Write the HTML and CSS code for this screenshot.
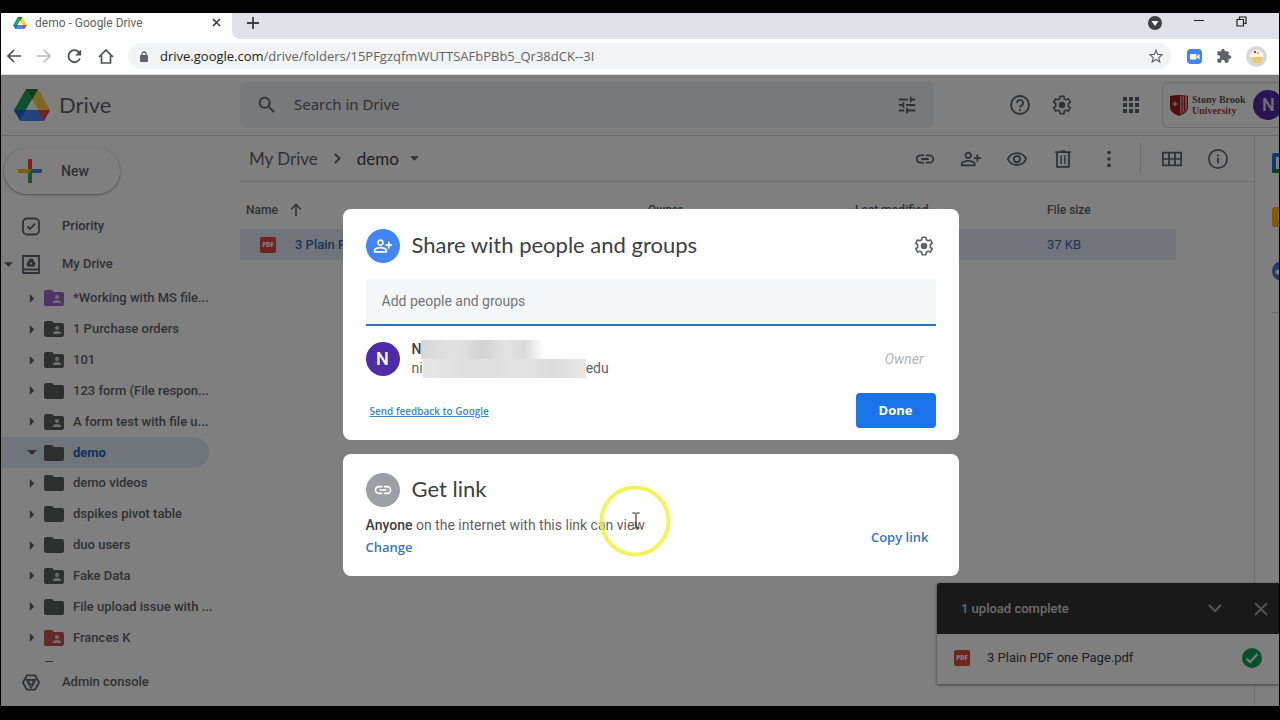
FILE: index.html
```html
<!DOCTYPE html>
<html lang="en">
<head>
<meta charset="utf-8">
<title>demo - Google Drive</title>
<link rel="stylesheet" href="styles.css">
</head>
<body>
<svg class="defs" aria-hidden="true">
  <symbol id="drive" viewBox="0 0 36 32">
    <path fill="#1fa463" d="M12 0h12L6 31 0 21z"/>
    <path fill="#ffcf48" d="M12 0h12l12 21H24z"/>
    <path fill="#4688f4" d="M0 21h36l-6 11H6z"/>
    <path fill="#188038" d="M12 0h12l-6 10.500z"/>
    <path fill="#1967d2" d="M0 21h12L6 31z"/>
    <path fill="#ea4335" d="M24 21h12l-6 11z"/>
    <path fill="#fff" d="M18 10.500 24 21H12z"/>
  </symbol>
  <symbol id="search" viewBox="0 0 24 24"><path d="M15.500 14h-.79l-.28-.27A6.470 6.470 0 0 0 16 9.500 6.500 6.500 0 1 0 9.500 16c1.610 0 3.090-.59 4.230-1.570l.27.28v.79l5 4.990L20.490 19l-4.990-5zm-6 0a4.500 4.500 0 1 1 0-9 4.500 4.500 0 0 1 0 9z"/></symbol>
  <symbol id="gear" viewBox="0 0 24 24">
    <path fill="none" stroke="currentColor" stroke-width="2" stroke-linejoin="round" d="M9.800 1.500h4.400l.6 3 2 1.200 2.900-1 2.200 3.800-2.300 2v3l2.300 2-2.200 3.800-2.900-1-2 1.200-.6 3H9.800l-.6-3-2-1.200-2.900 1-2.200-3.800 2.300-2v-3l-2.300-2 2.200-3.800 2.900 1 2-1.200z"/>
    <circle cx="12" cy="12" r="3.900"/>
  </symbol>
  <symbol id="person-add" viewBox="0 0 24 24"><path d="M9 12c2.210 0 4-1.790 4-4s-1.790-4-4-4-4 1.790-4 4 1.790 4 4 4zm0-6c1.100 0 2 .9 2 2s-.9 2-2 2-2-.9-2-2 .9-2 2-2zm0 7c-2.670 0-8 1.340-8 4v3h16v-3c0-2.660-5.330-4-8-4zm6 5H3v-.99C3.200 16.290 6.300 15 9 15s5.800 1.290 6 2v1zm5-8V7h-2v3h-3v2h3v3h2v-3h3v-2z"/></symbol>
  <symbol id="link" viewBox="0 0 24 24"><path d="M3.900 12c0-1.710 1.390-3.100 3.100-3.100h4V7H7a5 5 0 0 0 0 10h4v-1.900H7c-1.710 0-3.100-1.390-3.100-3.100zM8 13h8v-2H8v2zm9-6h-4v1.900h4a3.100 3.100 0 0 1 0 6.200h-4V17h4a5 5 0 0 0 0-10z"/></symbol>
  <symbol id="folder" viewBox="0 0 20 16"><path d="M2 0h6l2 2h8a2 2 0 0 1 2 2v10a2 2 0 0 1-2 2H2a2 2 0 0 1-2-2V2a2 2 0 0 1 2-2z"/></symbol>
  <symbol id="shared" viewBox="0 0 20 16"><path d="M2 0h6l2 2h8a2 2 0 0 1 2 2v10a2 2 0 0 1-2 2H2a2 2 0 0 1-2-2V2a2 2 0 0 1 2-2z"/><path fill="#ddd" d="M13 5a2 2 0 1 1 0 4 2 2 0 0 1 0-4zm-4 8v-1c0-1.300 2.600-2 4-2s4 .7 4 2v1z"/></symbol>
  <symbol id="right" viewBox="0 0 10 10"><path d="M2.500 0l5 5-5 5z"/></symbol>
  <symbol id="down" viewBox="0 0 10 5"><path d="M0 0h10L5 5z"/></symbol>
</svg>

<div class="window">
  <div class="tabstrip">
    <div class="tab">
      <svg class="favicon"><use href="#drive"/></svg>
      <span class="tab-title">demo - Google Drive</span>
      <button class="plain" aria-label="Close tab"><svg width="9" height="9" viewBox="0 0 9 9"><path d="M1 1l7 7M8 1L1 8" stroke="#3c4043" stroke-width="1.700"/></svg></button>
    </div>
    <div class="strip">
      <button class="plain" aria-label="New tab"><svg width="12" height="12" viewBox="0 0 12 12"><path d="M6 0v12M0 6h12" stroke="#3c4043" stroke-width="1.800"/></svg></button>
      <div class="window-buttons">
        <svg width="14" height="14" viewBox="0 0 14 14"><circle cx="7" cy="7" r="7" fill="#3c4043"/><path d="M3.500 5h7L7 10z" fill="#fff"/></svg>
        <button class="plain" aria-label="Minimize"><svg width="10" height="10" viewBox="0 0 10 10"><path d="M0 2.500h10" stroke="#222"/></svg></button>
        <button class="plain" aria-label="Restore"><svg width="11" height="14" viewBox="0 0 11 14"><path d="M1 3.500h6.500V10H1zM3.500 3.500V1H10v6.500H7.500" fill="none" stroke="#222" stroke-width="1.200"/></svg></button>
      </div>
    </div>
  </div>

  <div class="browser-bar">
    <button class="plain" aria-label="Back"><svg width="14" height="14" viewBox="0 0 14 14"><path d="M14 7H1.500M7 1L1 7l6 6" fill="none" stroke="#4c5054" stroke-width="1.700"/></svg></button>
    <button class="plain" aria-label="Forward"><svg width="14" height="14" viewBox="0 0 14 14"><path d="M0 7h12.500M7 1l6 6-6 6" fill="none" stroke="#babcbe" stroke-width="1.700"/></svg></button>
    <button class="plain" aria-label="Reload"><svg width="15" height="15" viewBox="0 0 15 15"><path d="M13 9.500A6 6 0 1 1 12 3.300L13 4.500" fill="none" stroke="#4c5054" stroke-width="1.800"/><path d="M14.200.5v6H8.200z" fill="#4c5054"/></svg></button>
    <button class="plain" aria-label="Home"><svg width="16" height="15" viewBox="0 0 16 15"><path d="M1 8l7-7 7 7M3.500 6.500V14h9V6.500" fill="none" stroke="#4c5054" stroke-width="1.700"/></svg></button>
    <div class="omnibox">
      <svg width="8" height="11" viewBox="0 0 8 11"><rect y="4" width="8" height="7" rx="1" fill="#5f6368"/><path d="M2 5V3a2 2 0 0 1 4 0v2" fill="none" stroke="#5f6368" stroke-width="1.300"/></svg>
      <span class="url"><span class="host">drive.google.com</span>/drive/folders/15PFgzqfmWUTTSAFbPBb5_Qr38dCK--3I</span>
      <button class="plain" aria-label="Bookmark"><svg width="14" height="14" viewBox="0 0 24 24"><path d="M12 2l3 7.200 7.500.6-5.700 5 1.700 7.400L12 18l-6.500 4.200L7.200 14.800l-5.700-5L9 9.200z" fill="none" stroke="#5f6368" stroke-width="2"/></svg></button>
    </div>
    <div class="extensions">
      <svg width="15" height="15" viewBox="0 0 15 15"><rect width="15" height="15" rx="4" fill="#4385e8"/><rect x="3" y="5" width="6.500" height="5.500" rx="1" fill="#fff"/><path d="M10 7l2.500-2v5.500L10 8.500z" fill="#fff"/></svg>
      <svg width="16" height="16" viewBox="0 0 24 24" fill="#5f6368"><path d="M20.500 11H19V7a2 2 0 0 0-2-2h-4V3.500a2.500 2.500 0 0 0-5 0V5H4a2 2 0 0 0-2 2v3.800h1.500a2.700 2.700 0 0 1 0 5.400H2V20c0 1.100.9 2 2 2h3.800v-1.500a2.700 2.700 0 0 1 5.400 0V22H17a2 2 0 0 0 2-2v-4h1.500a2.500 2.500 0 0 0 0-5z"/></svg>
      <svg width="21" height="21" viewBox="0 0 21 21"><circle cx="10.500" cy="10.500" r="10.500" fill="#d8d8d6"/><path d="M5 11h12l-3 6H8z" fill="#efc66f"/><path d="M4 11c-1-3 1-4 2-4 1-4 7-4 9-1 3 0 3 4 2 5z" fill="#fff6ec"/><circle cx="9" cy="6" r="1.200" fill="#a3463f"/><circle cx="12" cy="7" r=".8" fill="#a3463f"/></svg>
    </div>
  </div>

  <div class="app">
    <header class="header">
      <div class="brand"><svg class="logo"><use href="#drive"/></svg><span>Drive</span></div>
      <label class="search">
        <svg class="i24"><use href="#search"/></svg>
        <input type="text" placeholder="Search in Drive" aria-label="Search in Drive">
        <svg class="i24" viewBox="0 0 24 24"><path d="M3 17v2h6v-2H3zM3 5v2h10V5H3zm10 16v-2h8v-2h-8v-2h-2v6h2zM7 9v2H3v2h4v2h2V9H7zm14 4v-2H11v2h10zm-6-4h2V7h4V5h-4V3h-2v6z"/></svg>
      </label>
      <div class="header-tools">
        <button class="plain" aria-label="Support"><svg class="i20" viewBox="0 0 20 20"><circle cx="10" cy="10" r="9" fill="none" stroke="currentColor" stroke-width="1.800"/><path d="M7 8a3 3 0 1 1 4.500 2.500c-1 .7-1.500 1.200-1.500 2" fill="none" stroke="currentColor" stroke-width="1.800"/><circle cx="10" cy="15" r="1.100"/></svg></button>
        <button class="plain" aria-label="Settings"><svg class="i20"><use href="#gear"/></svg></button>
        <button class="plain apps" aria-label="Apps"><svg width="16" height="16" viewBox="0 0 16 16"><path d="M0 0h4v4H0zM6 0h4v4H6zM12 0h4v4h-4zM0 6h4v4H0zM6 6h4v4H6zM12 6h4v4h-4zM0 12h4v4H0zM6 12h4v4H6zM12 12h4v4h-4z"/></svg></button>
      </div>
      <div class="account">
        <svg width="18" height="21" viewBox="0 0 18 21"><path d="M0 1q9-2 18 0v11q0 6-9 9-9-3-9-9z" fill="#a51d1d"/><path d="M10 1q4-.5 7 .5V12q0 5-7 7z" fill="#c99"/><path d="M12 1v17M14.500 1v15" stroke="#a51d1d"/><path d="M5 6l1 2 2 1-2 1-1 2-1-2-2-1 2-1z" fill="#e8b8b8"/></svg>
        <span class="school"><b>Stony Brook</b><span>University</span></span>
        <span class="avatar small">N</span>
      </div>
    </header>

    <div class="body">
      <nav class="sidebar">
        <button class="new"><svg width="24" height="24" viewBox="0 0 24 24"><path fill="#ea4335" d="M10 0h4v10h-4z"/><path fill="#fbbc04" d="M0 10h14l-4 4H0z"/><path fill="#4285f4" d="M14 10h10v4H14z"/><path fill="#34a853" d="M10 14l4-4v14h-4z"/></svg>New</button>
        <a class="place" href="#"><span class="caret"></span><svg class="i18" viewBox="0 0 18 18"><rect x="1" y="1" width="16" height="16" rx="4" fill="none" stroke="currentColor" stroke-width="1.800"/><path d="M5.500 9l2.500 2.500L13 6" fill="none" stroke="currentColor" stroke-width="1.800"/></svg>Priority</a>
        <a class="place" href="#"><svg class="caret"><use href="#down"/></svg><svg class="i18" viewBox="0 0 18 19"><path d="M1 1h16v17H1zM1 14.500h16" fill="none" stroke="currentColor" stroke-width="1.800"/><path d="M7.500 3.500h3l3.200 5.500-1.500 2.800H5.800L4.300 9zM9 6.800L7.700 9.200h2.600z" fill-rule="evenodd"/></svg>My Drive</a>
        <div class="folders">
          <a class="row" href="#"><svg class="arrow"><use href="#right"/></svg><svg class="folder purple"><use href="#shared"/></svg><span>*Working with MS file...</span></a>
          <a class="row" href="#"><svg class="arrow"><use href="#right"/></svg><svg class="folder"><use href="#shared"/></svg><span>1 Purchase orders</span></a>
          <a class="row" href="#"><svg class="arrow"><use href="#right"/></svg><svg class="folder"><use href="#shared"/></svg><span>101</span></a>
          <a class="row" href="#"><svg class="arrow"><use href="#right"/></svg><svg class="folder"><use href="#folder"/></svg><span>123 form (File respon...</span></a>
          <a class="row" href="#"><svg class="arrow"><use href="#right"/></svg><svg class="folder"><use href="#shared"/></svg><span>A form test with file u...</span></a>
          <a class="row current" href="#"><svg class="arrow"><use href="#down"/></svg><svg class="folder"><use href="#folder"/></svg><span>demo</span></a>
          <a class="row" href="#"><svg class="arrow"><use href="#right"/></svg><svg class="folder"><use href="#folder"/></svg><span>demo videos</span></a>
          <a class="row" href="#"><svg class="arrow"><use href="#right"/></svg><svg class="folder"><use href="#folder"/></svg><span>dspikes pivot table</span></a>
          <a class="row" href="#"><svg class="arrow"><use href="#right"/></svg><svg class="folder"><use href="#folder"/></svg><span>duo users</span></a>
          <a class="row" href="#"><svg class="arrow"><use href="#right"/></svg><svg class="folder"><use href="#shared"/></svg><span>Fake Data</span></a>
          <a class="row" href="#"><svg class="arrow"><use href="#right"/></svg><svg class="folder"><use href="#folder"/></svg><span>File upload issue with ...</span></a>
          <a class="row" href="#"><svg class="arrow"><use href="#right"/></svg><svg class="folder red"><use href="#shared"/></svg><span>Frances K</span></a>
        </div>
        <div class="next-folder"></div>
        <a class="place admin" href="#"><span class="caret"></span><svg class="i18" viewBox="0 0 20 20"><path d="M5.500 2h9L19 10l-4.500 8h-9L1 10z" fill="none" stroke="currentColor" stroke-width="2"/><path d="M5 7h10l-2 4-3 5-3-5z" fill="none" stroke="currentColor" stroke-width="1.600"/><circle cx="10" cy="9.500" r="2.500" fill="none" stroke="currentColor" stroke-width="1.500"/></svg>Admin console</a>
      </nav>

      <main class="main">
        <div class="toolbar">
          <div class="crumbs">
            <a href="#">My Drive</a>
            <svg width="7" height="11" viewBox="0 0 7 11"><path d="M1 1l4.500 4.500L1 10" fill="none" stroke="#5f6368" stroke-width="1.800"/></svg>
            <a href="#" class="here">demo</a>
            <svg class="crumb-caret"><use href="#down"/></svg>
          </div>
          <div class="actions">
            <button class="plain" aria-label="Get link"><svg class="i24"><use href="#link"/></svg></button>
            <button class="plain" aria-label="Share"><svg class="i24"><use href="#person-add"/></svg></button>
            <button class="plain" aria-label="Preview"><svg class="i24" viewBox="0 0 24 24"><path d="M12 5.500c-4.600 0-8.300 2.500-10 6.500 1.700 4 5.400 6.500 10 6.500s8.300-2.500 10-6.500c-1.700-4-5.400-6.500-10-6.500z" fill="none" stroke="currentColor" stroke-width="2"/><circle cx="12" cy="12" r="3.500" fill="none" stroke="currentColor" stroke-width="2"/></svg></button>
            <button class="plain" aria-label="Remove"><svg class="i24" viewBox="0 0 24 24"><path d="M5.500 5v15.500h13V5M3.500 4.500h17M9.500 3.500h5" fill="none" stroke="currentColor" stroke-width="2"/><path d="M10 8v9.500M14 8v9.500" stroke="currentColor" stroke-width="1.500"/></svg></button>
            <button class="plain" aria-label="More actions"><svg class="i24" viewBox="0 0 24 24"><circle cx="12" cy="5" r="2"/><circle cx="12" cy="12" r="2"/><circle cx="12" cy="19" r="2"/></svg></button>
            <span class="divider"></span>
            <button class="plain" aria-label="Grid view"><svg class="i24" viewBox="0 0 24 24"><path d="M2 5h20v14H2zM2 12h20M8.700 5v14M15.300 5v14" fill="none" stroke="currentColor" stroke-width="1.900"/></svg></button>
            <button class="plain" aria-label="View details"><svg class="i24" viewBox="0 0 24 24"><circle cx="12" cy="12" r="10" fill="none" stroke="currentColor" stroke-width="1.800"/><path d="M11 11h2v6h-2zM11 7h2v2h-2z"/></svg></button>
          </div>
        </div>
        <table class="files">
          <thead><tr><th class="c-name">Name <svg width="12" height="13" viewBox="0 0 12 13"><path d="M6 13V1.500M1 6.500l5-5 5 5" fill="none" stroke="#5f6368" stroke-width="1.600"/></svg></th><th class="c-owner">Owner</th><th class="c-date">Last modified</th><th>File size</th></tr></thead>
          <tbody><tr><td><span class="file"><span class="pdf">PDF</span><span>3 Plain PDF one Page.pdf</span></span></td><td></td><td></td><td class="size">37 KB</td></tr></tbody>
        </table>
      </main>

      <aside class="side">
        <svg width="20" height="20" viewBox="0 0 20 20"><rect width="20" height="20" rx="2" fill="#1a73e8"/><path d="M4 4h12v12H4z" fill="#fff"/><path d="M0 16h16v4H2q-2 0-2-2z" fill="#188038"/><path d="M7 7h5M7 10h5M7 13h5" stroke="#1a73e8" stroke-width="2"/></svg>
        <svg width="20" height="20" viewBox="0 0 20 20"><rect width="20" height="20" rx="2" fill="#fbbc04"/><circle cx="10" cy="9" r="4" fill="#fff"/></svg>
        <svg width="20" height="20" viewBox="0 0 20 20"><circle cx="10" cy="10" r="10" fill="#4a78cc"/><circle cx="6" cy="11" r="2.500" fill="#fff"/><path d="M7 10l7-5" stroke="#fff" stroke-width="2"/></svg>
        <hr>
      </aside>
    </div>

    <section class="upload">
      <div class="upload-head">
        <span>1 upload complete</span>
        <button class="plain" aria-label="Minimize uploads"><svg width="14" height="9" viewBox="0 0 14 9"><path d="M1 1l6 6 6-6" fill="none" stroke="#aaa" stroke-width="2"/></svg></button>
        <button class="plain" aria-label="Close uploads"><svg width="14" height="14" viewBox="0 0 14 14"><path d="M1 1l12 12M13 1L1 13" stroke="#aaa" stroke-width="1.800"/></svg></button>
      </div>
      <div class="upload-item">
        <span class="pdf">PDF</span>
        <span class="upload-name">3 Plain PDF one Page.pdf</span>
        <svg width="20" height="20" viewBox="0 0 20 20"><circle cx="10" cy="10" r="10" fill="#0f9d58"/><path d="M4.500 10.500l3.500 3.500 7.500-8" fill="none" stroke="#fff" stroke-width="2"/></svg>
      </div>
    </section>

    <div class="scrim">
      <section class="card" role="dialog" aria-label="Share with people and groups">
        <div class="card-title">
          <span class="badge blue"><svg class="i20"><use href="#person-add"/></svg></span>
          <h2>Share with people and groups</h2>
          <button class="plain settings" aria-label="Share settings"><svg class="i20"><use href="#gear"/></svg></button>
        </div>
        <input class="people" type="text" placeholder="Add people and groups" aria-label="Add people and groups">
        <div class="person">
          <span class="avatar">N</span>
          <div class="who">
            <div class="name">N<span class="mask mask-name"></span></div>
            <div class="mail">ni<span class="mask mask-mail"></span>edu</div>
          </div>
          <em>Owner</em>
        </div>
        <div class="card-foot"><a href="#">Send feedback to Google</a><button class="done">Done</button></div>
      </section>
      <section class="card link-card">
        <div class="card-title"><span class="badge gray"><svg class="i20"><use href="#link"/></svg></span><h2>Get link</h2></div>
        <div class="link-row">
          <div class="link-info">
            <p><b>Anyone</b> on the internet with this link can view</p>
            <button class="text-button">Change</button>
          </div>
          <button class="text-button copy">Copy link</button>
        </div>
        <svg class="pointer" viewBox="0 0 72 72"><circle cx="36" cy="36" r="33.500" fill="none" stroke="#f0f032" stroke-opacity=".8" stroke-width="4"/><path d="M33.500 28h3M37.500 28h3M37 28.500v14M33.500 43h3M37.500 43h3" stroke="#111"/></svg>
      </section>
    </div>
  </div>
</div>
</body>
</html>
```
FILE: styles.css
```css
* { box-sizing: border-box; }
body {
  margin: 0;
  background: #000;
  color: #5f6368;
  font: 14px/20px Roboto, sans-serif;
}
a { color: inherit; text-decoration: none; }
button, input { font: inherit; color: inherit; border: 0; }
svg { display: block; flex: none; fill: currentColor; }
.defs { position: absolute; width: 0; height: 0; }
.plain { display: block; padding: 0; background: none; }
.pdf {
  width: 16px;
  height: 16px;
  flex: none;
  border-radius: 2px;
  background: #e2473b;
  color: #fff;
  font: 800 6px/16px "Open Sans", sans-serif;
  text-align: center;
}
.i18 { width: 18px; height: 19px; }
.i20 { width: 20px; height: 20px; }
.i24 { width: 22px; height: 22px; }

.window {
  display: flex;
  flex-direction: column;
  height: 100vh;
  border: solid #000;
  border-width: 13px 1px 14px;
  background: #fff;
  overflow: hidden;
}

/* Browser chrome */
.tabstrip { display: flex; height: 26px; flex: none; }
.tab { display: flex; align-items: center; width: 231px; padding: 0 11px 7px 12px; }
.favicon { width: 14px; height: 12px; margin-right: 8px; }
.tab-title { flex: 1; font-size: 12px; line-height: 16px; }
.strip {
  display: flex;
  flex: 1;
  align-items: center;
  padding: 0 32px 7px 15px;
  border-bottom-left-radius: 8px;
  background: #dee1e6;
}
.window-buttons { display: flex; align-items: center; gap: 32px; margin-left: auto; }
.browser-bar {
  display: flex;
  align-items: center;
  gap: 16px;
  height: 36px;
  flex: none;
  padding: 0 12px 1px 6px;
  border-bottom: 1px solid #dadce0;
}
.omnibox {
  display: flex;
  flex: 1;
  align-items: center;
  gap: 12px;
  height: 26px;
  margin-left: -2px;
  padding: 0 8px 0 12px;
  border-radius: 13px;
  background: #f1f3f4;
}
.url { flex: 1; font: 13px/18px "Open Sans", sans-serif; }
.host { color: #202124; }
.extensions { display: flex; align-items: center; gap: 14px; }

/* Drive */
.app { position: relative; display: flex; flex: 1; flex-direction: column; min-height: 0; overflow: hidden; }
.header { display: flex; align-items: center; height: 61px; flex: none; border-bottom: 1px solid #dadce0; }
.brand { display: flex; align-items: center; gap: 9px; width: 239px; padding-left: 13px; font: 22px/28px Lato, sans-serif; }
.logo { width: 36px; height: 32px; }
.search { display: flex; flex: 1; align-items: center; gap: 16px; height: 46px; padding: 0 16px; border-radius: 6px; background: #f1f3f4; }
.search input { flex: 1; min-width: 0; padding: 0 0 2px; background: none; font: 15px/20px "Noto Sans", sans-serif; outline: 0; }
.search input::placeholder { color: #5f6368; opacity: 1; }
.header-tools { display: flex; align-items: center; gap: 22px; padding: 0 23px 0 76px; }
.apps { margin-left: 29px; }
.account {
  display: flex;
  align-items: center;
  gap: 4px;
  width: 117px;
  height: 46px;
  flex: none;
  padding-left: 7px;
  border: 1px solid #dadce0;
  border-right: 0;
  border-radius: 6px 0 0 6px;
  overflow: hidden;
}
.school { display: flex; flex-direction: column; width: 54px; font: bold 10px/11px "Liberation Serif", serif; color: #555; white-space: nowrap; }
.school span { color: #a84040; }
.avatar {
  width: 34px;
  height: 34px;
  flex: none;
  border-radius: 50%;
  background: #4f2ba8;
  color: #fff;
  font: 500 18px/34px Roboto, sans-serif;
  text-align: center;
}
.avatar.small { width: 30px; height: 30px; margin-left: 4px; line-height: 30px; color: #ddd; }
.body { display: flex; flex: 1; min-height: 0; }
.sidebar { display: flex; flex-direction: column; width: 239px; flex: none; padding: 12px 31px 10px 0; font-weight: 500; font-size: 13px; }
.new {
  display: flex;
  align-items: center;
  gap: 19px;
  width: 116px;
  height: 46px;
  margin: 0 0 13px 3px;
  padding: 0 14px;
  border-radius: 23px;
  background: #fff;
  box-shadow: 0 1px 3px #0006;
  font-size: 14px;
  font-weight: 500;
}
.place { display: flex; align-items: center; height: 38px; flex: none; padding-left: 3px; }
.caret { width: 9px; height: 5px; margin-right: 9px; }
.place .i18 { margin-right: 22px; }
.folders { display: flex; flex: 1; flex-direction: column; min-height: 0; }
.row { display: flex; flex: 1; align-items: center; padding-left: 26px; border-radius: 0 16px 16px 0; }
.row span { white-space: nowrap; }
.arrow { width: 10px; height: 9px; margin-right: 7px; }
.folder { width: 20px; height: 16px; margin-right: 9px; color: #5a615f; }
.purple { color: #a364c8; }
.red { color: #c9564d; }
.current { background: #e0e8f6; }
.current .arrow { height: 5px; }
.current span { color: #2463b8; font-weight: 700; }
.next-folder { width: 8px; height: 1px; flex: none; margin: 8px 0 6px 44px; background: #5a615f; }
.admin { height: 28px; }

.main { flex: 1; min-width: 0; }
.toolbar { display: flex; align-items: center; justify-content: space-between; height: 46px; padding: 0 25px 0 9px; border-bottom: 1px solid #dadce0; }
.crumbs { display: flex; align-items: center; gap: 16px; font: 17px/24px Lato, sans-serif; }
.here { color: #3c4043; }
.crumb-caret { width: 9px; height: 5px; margin-left: -5px; }
.actions { display: flex; align-items: center; gap: 24px; }
.divider { width: 1px; height: 31px; margin: 0 -4px 0 -4px; background: #dadce0; }
.files { width: calc(100% - 78px); border-collapse: collapse; table-layout: fixed; text-align: left; font-size: 13px; }
.files th { height: 47px; padding: 9px 0 0; font-weight: 500; font-size: 12px; }
.files th svg { display: inline-block; margin-left: 9px; vertical-align: -2px; }
.files .c-name { width: 408px; padding-left: 6px; }
.c-owner { width: 207px; }
.c-date { width: 192px; }
.files td { height: 31px; padding: 0; background: #e3eaf6; color: #3a69ad; }
.file { display: flex; align-items: center; gap: 19px; padding-left: 20px; font-weight: 500; }
.side { display: flex; flex-direction: column; gap: 34px; width: 25px; flex: none; padding: 17px 0 0 17px; border-left: 1px solid #dadce0; overflow: hidden; }
.side hr { width: 20px; margin: -3px 0 0; border: 0; border-top: 1px solid #dadce0; }

.upload { position: absolute; right: 0; bottom: 22px; width: 342px; background: #fff; box-shadow: 0 1px 3px #0008; }
.upload-head { display: flex; align-items: center; gap: 32px; height: 51px; padding: 0 11px 0 24px; border-radius: 3px 0 0; background: #323232; color: #d8d8d8; font-size: 13px; font-weight: 500; }
.upload-head span, .upload-name { flex: 1; }
.upload-item { display: flex; align-items: center; gap: 17px; height: 50px; padding: 0 17px 3px 17px; color: #3c4043; font-size: 13px; }

/* Share dialog */
.scrim { position: absolute; inset: 0; display: flex; flex-direction: column; align-items: center; gap: 14px; padding: 134px 0 0 21px; background: #00000080; }
.card { position: relative; width: 616px; max-width: 100%; padding: 20px 23px 12px; border-radius: 8px; background: #fff; }
.card-title { display: flex; align-items: center; gap: 12px; height: 34px; }
h2 { margin: 0; padding-bottom: 2px; color: #3c4043; font: 22px/28px Lato, sans-serif; }
.badge { display: grid; place-items: center; width: 34px; height: 34px; border-radius: 50%; color: #fff; }
.blue { background: #4285f4; }
.gray { background: #9aa0a6; }
.settings { margin-left: auto; margin-right: 2px; }
.people { display: block; width: 100%; height: 47px; margin-top: 16px; padding: 0 16px 2px; border-bottom: 2px solid #3672b9; background: #f5f8f9; outline: 0; }
.people::placeholder { color: #70757a; opacity: 1; }
.person { display: flex; align-items: center; gap: 12px; height: 38px; margin-top: 14px; }
.who { flex: 1; line-height: 19px; }
.who div { display: flex; }
.name { color: #3c4043; font-weight: 500; }
.mask-name { width: 122px; height: 19px; background: linear-gradient(90deg, #d8d8d8, #e2e2e2 30%, #d2d2d2 50%, #e4e4e4 70%, #dadada 85%, #fff); }
.mask-mail { width: 163px; background: linear-gradient(90deg, #e6e6e6, #dedede 35%, #e4e4e4 60%, #dcdcdc 80%, #e8e8e8); }
.person em { margin-right: 12px; color: #b4b6b8; }
.card-foot { display: flex; align-items: center; justify-content: space-between; margin-top: 15px; padding-left: 4px; }
.card-foot a { color: #3b86c4; font: 600 10px/14px "Open Sans", sans-serif; text-decoration: underline; }
.done { width: 80px; height: 35px; padding: 0 0 2px; border-radius: 4px; background: #1a73e8; color: #fff; font: 700 13px/20px "Open Sans", sans-serif; }
.link-card { padding-top: 19px; padding-bottom: 17px; }
.link-row { display: flex; align-items: center; justify-content: space-between; padding-right: 7px; }
.link-info { padding-top: 8px; }
.link-info p { margin: 0; line-height: 20px; }
.link-info b { color: #3c4043; font-weight: 500; }
.text-button { padding: 0; background: none; color: #3279bd; font: 600 13px/24px "Open Sans", sans-serif; }
.copy { margin-top: 8px; }
.pointer { position: absolute; left: 256px; top: 31px; width: 72px; height: 72px; }
```
